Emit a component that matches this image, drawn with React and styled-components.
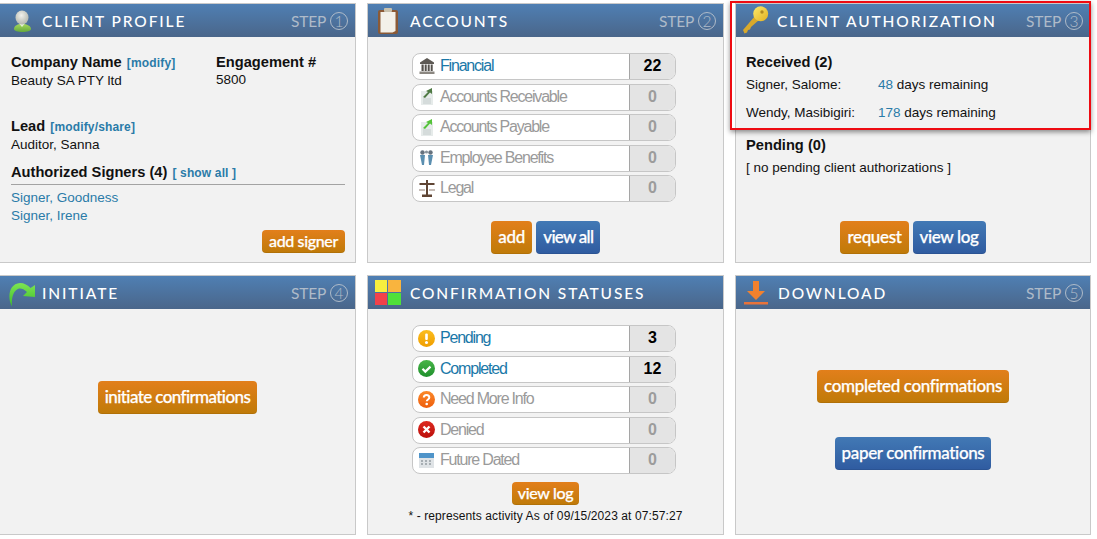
import React from "react";
import styled, { createGlobalStyle } from "styled-components";

const GlobalStyle = createGlobalStyle`
  html, body { margin: 0; padding: 0; background: #fff; }
  body { font-family: "Liberation Sans", Arial, sans-serif; font-size: 13.5px; color: #111; }
`;

const Page = styled.div`
  display: grid;
  grid-template-columns: 356px 357px 356px;
  grid-template-rows: 260px 260px;
  column-gap: 11px;
  row-gap: 12px;
  padding-top: 3px;
  width: 1097px;
  height: 536px;
  overflow: hidden;
`;

const PanelBox = styled.section`
  position: relative;
  display: flex;
  flex-direction: column;
  box-sizing: border-box;
  background: #f2f2f2;
  border: 1px solid #c9c9c9;
  border-left-width: ${(p) => (p.$flushLeft ? "0" : "1px")};
`;

const PanelHead = styled.header`
  display: flex;
  align-items: center;
  flex: none;
  height: 33px;
  padding-left: ${(p) => (p.$flushLeft ? "8px" : "6px")};
  padding-right: 7px;
  background: linear-gradient(#4f7fb3, #4a668a);
`;

const HeadIcon = styled.span`
  display: flex;
  align-items: center;
  justify-content: center;
  flex: none;
  width: 28px;
  height: 33px;
  margin-right: ${(p) => p.$gap}px;
`;

const Title = styled.h2`
  flex: 1;
  margin: 0;
  font-family: Lato, sans-serif;
  font-size: 15.5px;
  font-weight: 500;
  letter-spacing: 1.9px;
  color: #fff;
  white-space: nowrap;
`;

const Step = styled.div`
  display: flex;
  align-items: center;
  gap: 4px;
  font-family: Lato, sans-serif;
  font-size: 15.5px;
  letter-spacing: -0.2px;
  color: #afbbc9;
`;

const StepNum = styled.span`
  display: flex;
  align-items: center;
  justify-content: center;
  box-sizing: border-box;
  width: 18px;
  height: 18px;
  border: 1px solid #afbbc9;
  border-radius: 50%;
  font-size: 15.5px;
  font-weight: 300;
`;

const PanelBody = styled.div`
  flex: 1;
  display: flex;
  flex-direction: column;
  min-height: 0;
  padding: ${(p) => p.$padding || "0"};
`;

const ProfileTop = styled.div`
  display: grid;
  grid-template-columns: 205px 1fr;
  padding-top: 17px;
  height: 64px;
`;

const FieldLabel = styled.div`
  font-size: 14.67px;
  font-weight: 700;
  line-height: 17px;
`;

const FieldValue = styled.div`
  line-height: 18px;
`;

const SmallLink = styled.a`
  margin-left: 1px;
  font-size: 12px;
  font-weight: 700;
  letter-spacing: 0.15px;
  color: #2a7ba8;
`;

const SectionRule = styled.div`
  margin-top: 4px;
  border-bottom: 1px solid #a3a3a3;
  padding-bottom: 2px;
`;

const SignerLink = styled.div`
  line-height: 18px;
  color: #2a7ba8;
`;

const SignerList = styled.div`
  margin-top: 4px;
`;

const SignerBlock = styled.div`
  margin-top: 6px;
`;

const ButtonRow = styled.div`
  display: flex;
  justify-content: ${(p) => p.$align || "center"};
  gap: 4px;
  margin-top: ${(p) => p.$top || "auto"};
  padding-bottom: ${(p) => p.$bottom ?? 8}px;
`;

const Button = styled.button`
  display: block;
  box-sizing: border-box;
  height: ${(p) => p.$height || 33}px;
  padding: 0 ${(p) => p.$pad || 7}px 2px;
  border: 0;
  border-radius: 4px;
  font-family: Lato, sans-serif;
  font-size: ${(p) => p.$size || 17}px;
  font-weight: 500;
  letter-spacing: ${(p) => p.$track ?? -0.35}px;
  -webkit-text-stroke: 0.25px #fff;
  color: #fff;
  white-space: nowrap;
  background: ${(p) =>
    p.$blue
      ? "linear-gradient(#4279b5, #2f5ba0)"
      : "linear-gradient(#e27f1b, #bf7a08)"};
  box-shadow: inset 0 -1px 0 rgba(0, 0, 0, 0.08);
`;

const RowList = styled.div`
  display: flex;
  flex-direction: column;
  gap: 3.5px;
  width: 264px;
  margin: 16px 0 0 44px;
`;

const Row = styled.div`
  display: flex;
  box-sizing: border-box;
  height: 27px;
  overflow: hidden;
  border: 1px solid #c6c6c6;
  border-radius: 8px;
  background: #fff;
`;

const RowLabel = styled.div`
  flex: 1;
  display: flex;
  align-items: center;
  gap: 5px;
  padding: 0 0 1px 5px;
  font-size: 16px;
  letter-spacing: -1.2px;
  color: ${(p) => (p.$active ? "#1a78a8" : "#9a9a9a")};
`;

const RowIcon = styled.span`
  display: flex;
  align-items: center;
  justify-content: center;
  flex: none;
  width: 17px;
  height: 17px;
`;

const RowCount = styled.div`
  display: flex;
  align-items: center;
  justify-content: center;
  flex: none;
  width: 45px;
  padding-bottom: 1px;
  border-left: 1px solid #a5a5a5;
  background: #e4e4e4;
  font-size: 16px;
  font-weight: 700;
  color: ${(p) => (p.$active ? "#000" : "#9c9c9c")};
`;

const FootNote = styled.div`
  padding-top: 3px;
  text-align: center;
  font-size: 12px;
  line-height: 16px;
  letter-spacing: 0.1px;
`;

const AuthHeading = styled.div`
  font-size: 14.67px;
  font-weight: 700;
  line-height: 17px;
`;

const AuthLine = styled.div`
  display: grid;
  grid-template-columns: 132px 1fr;
  line-height: 17px;
  margin-top: ${(p) => p.$top}px;
`;

const Days = styled.span`
  color: #2a7ba8;
`;

const PendingBlock = styled.div`
  margin-top: 16px;
`;

const PendingNote = styled.div`
  margin-top: 5px;
  line-height: 17px;
`;

const Highlight = styled.div`
  position: absolute;
  left: -6px;
  right: -1px;
  top: -3px;
  height: 125px;
  border: 2px solid #ee0b12;
  box-shadow: 0 2px 5px rgba(0, 0, 0, 0.45);
  pointer-events: none;
`;

const CenterStack = styled.div`
  flex: 1;
  display: flex;
  flex-direction: column;
  align-items: center;
  padding-top: ${(p) => p.$top}px;
  gap: ${(p) => p.$gap || 0}px;
`;

/* drawings */

const PersonIcon = () => (
  <svg width="22" height="26" viewBox="0 0 22 26">
    <defs>
      <radialGradient id="head" cx="0.45" cy="0.35" r="0.75">
        <stop offset="0" stopColor="#f1f1ec" />
        <stop offset="1" stopColor="#a9ada3" />
      </radialGradient>
      <linearGradient id="shirt" x1="0" y1="0" x2="0" y2="1">
        <stop offset="0" stopColor="#a5d85c" />
        <stop offset="1" stopColor="#64a83c" />
      </linearGradient>
    </defs>
    <path d="M3 21c0-3 3-5 8-5s9 2 9 5c0 2-4 3-8.500 3S3 23 3 21z" fill="url(#shirt)" />
    <path d="M8 15.500l3 3.500 3-3.500z" fill="#e2efd2" />
    <ellipse cx="11" cy="9.500" rx="6.500" ry="7" fill="url(#head)" />
  </svg>
);

const ClipboardIcon = () => (
  <svg width="22" height="28" viewBox="0 0 22 28">
    <rect x="1" y="3" width="20" height="24" rx="2" fill="#8b5a36" />
    <path d="M3.500 5h15v19l-3 1.500h-12z" fill="#f3f1e9" />
    <rect x="7" y="1" width="8" height="4" rx="1" fill="#c9c2ae" />
  </svg>
);

const KeyIcon = () => (
  <svg width="28" height="30" viewBox="0 0 28 30">
    <defs>
      <linearGradient id="gold" x1="0" y1="0" x2="1" y2="1">
        <stop offset="0" stopColor="#fbea6c" />
        <stop offset="1" stopColor="#e3b021" />
      </linearGradient>
    </defs>
    <path d="M13 10L1 24l1.500 3.500L5 26.500 6 24l2-.5 1-2.500 8-7z" fill="#d8a92c" />
    <circle cx="18.700" cy="7.800" r="7.500" fill="url(#gold)" />
    <circle cx="20" cy="6" r="1.700" fill="#b28a20" />
  </svg>
);

const ArrowIcon = () => (
  <svg width="28" height="28" viewBox="0 0 28 28">
    <defs>
      <linearGradient id="bend" x1="0" y1="0" x2="0" y2="1">
        <stop offset="0" stopColor="#7ee552" />
        <stop offset="1" stopColor="#3dbd2b" />
      </linearGradient>
    </defs>
    <path
      d="M4 27.500C-1 19 1 4.500 12 4c4 0 8 2 10.500 5L27 6v12l-12-1 4-4c-3-3-6-4-8-3.500C6 11 3 18 4 27.500z"
      fill="url(#bend)"
    />
  </svg>
);

const SquaresIcon = () => (
  <svg width="26" height="25" viewBox="0 0 26 25">
    <rect x="0" y="0" width="12" height="12" fill="#f7ef3e" />
    <rect x="13" y="0" width="13" height="12" fill="#f9b43e" />
    <rect x="0" y="13" width="12" height="12" fill="#f2414a" />
    <rect x="13" y="13" width="13" height="12" fill="#4fe03a" />
  </svg>
);

const DownloadIcon = () => (
  <svg width="24" height="24" viewBox="0 0 24 24">
    <path d="M9 0h6v10h6l-9 9-9-9h6z" fill="#f2812e" />
    <rect x="0" y="21" width="24" height="2.500" fill="#e8733a" />
  </svg>
);

const BankIcon = () => (
  <svg width="16" height="16" viewBox="0 0 16 16">
    <path d="M8 0l7 4.500V6H1V4.500z" fill="#5d5954" />
    <path d="M2.500 6.500h2.200v6.500H2.500zM5.700 6.500h2v6.500h-2zM8.700 6.500h2v6.500h-2zM11.700 6.500h2v6.500h-2z" fill="#55514c" />
    <rect x="0.500" y="13.500" width="15" height="2.500" fill="#8b8781" />
  </svg>
);

const LedgerIcon = ({ arrow }) => (
  <svg width="14" height="17" viewBox="0 0 14 17">
    <rect x="1" y="3" width="12" height="14" fill="#e6ebea" />
    <path d="M3 11h8M3 13h8M3 15h8" stroke="#c4cccc" />
    <path d="M3 9l5-5-2-1 6-3v6l-2-1.500-5 5.500z" fill={arrow} />
  </svg>
);

const PeopleIcon = () => (
  <svg width="15" height="16" viewBox="0 0 15 16">
    <circle cx="3.500" cy="2.500" r="2.200" fill="#66727e" />
    <circle cx="11.500" cy="2.500" r="2.200" fill="#66727e" />
    <path d="M1 5h5l-1 10H3zM9 5h5l-2 10h-2z" fill="#5b8fb0" />
    <circle cx="7.500" cy="2" r="1.600" fill="#8a949c" />
  </svg>
);

const ScaleIcon = () => (
  <svg width="16" height="17" viewBox="0 0 16 17">
    <path d="M0.500 3h15v2H0.500zM7 0h2v15H7zM3 14.500h10V17H3z" fill="#5f4534" />
    <path d="M0 9.500h6v1H0zM10 9.500h6v1h-6z" fill="#8d7b6e" />
  </svg>
);

const Badge = ({ from, to, children }) => {
  const id = `badge-${from.slice(1)}`;
  return (
    <svg width="17" height="17" viewBox="0 0 17 17">
      <defs>
        <linearGradient id={id} x1="0" y1="0" x2="0" y2="1">
          <stop offset="0" stopColor={from} />
          <stop offset="1" stopColor={to} />
        </linearGradient>
      </defs>
      <circle cx="8.500" cy="8.500" r="8.500" fill={`url(#${id})`} />
      {children}
    </svg>
  );
};

const PendingIcon = () => (
  <Badge from="#fbbd1e" to="#f09e00">
    <rect x="7.200" y="3.500" width="2.600" height="6.500" rx="1" fill="#fff" />
    <circle cx="8.500" cy="12.500" r="1.500" fill="#fff" />
  </Badge>
);

const DoneIcon = () => (
  <Badge from="#48b548" to="#1f8f2c">
    <path d="M4.500 8.800l2.800 2.800 5.200-5" fill="none" stroke="#fff" strokeWidth="2.200" />
  </Badge>
);

const InfoIcon = () => (
  <Badge from="#fb8a2b" to="#ee5d0c">
    <path d="M5.800 6.500c0-3.500 5.500-3.500 5.500 0 0 2-2.500 2-2.500 3.800" fill="none" stroke="#fff" strokeWidth="2" />
    <circle cx="8.700" cy="13" r="1.300" fill="#fff" />
  </Badge>
);

const DeniedIcon = () => (
  <Badge from="#dd2a20" to="#bb0f0b">
    <path d="M5.500 5.500l6 6M11.500 5.500l-6 6" stroke="#fff" strokeWidth="2.400" />
  </Badge>
);

const CalendarIcon = () => (
  <svg width="17" height="17" viewBox="0 0 17 17">
    <rect x="1" y="1" width="15" height="15" fill="#dfe3e6" />
    <rect x="1" y="1" width="15" height="5" fill="#4f94c9" />
    <path d="M3 8h2v2H3zM7 8h2v2H7zM11 8h2v2h-2zM3 11h2v2H3zM7 11h2v2H7zM11 11h2v2h-2z" fill="#a7aeb3" />
  </svg>
);

/* pieces */

const Panel = ({ icon, title, step, gap = 8, flushLeft, children, overlay }) => (
  <PanelBox $flushLeft={flushLeft}>
    <PanelHead $flushLeft={flushLeft}>
      <HeadIcon $gap={gap}>{icon}</HeadIcon>
      <Title>{title}</Title>
      {step && (
        <Step>
          STEP<StepNum>{step}</StepNum>
        </Step>
      )}
    </PanelHead>
    {children}
    {overlay}
  </PanelBox>
);

const CountRow = ({ icon, label, count }) => (
  <Row>
    <RowLabel $active={count > 0}>
      <RowIcon>{icon}</RowIcon>
      {label}
    </RowLabel>
    <RowCount $active={count > 0}>{count}</RowCount>
  </Row>
);

const accounts = [
  { icon: <BankIcon />, label: "Financial", count: 22 },
  { icon: <LedgerIcon arrow="#4f7a45" />, label: "Accounts Receivable", count: 0 },
  { icon: <LedgerIcon arrow="#55c33a" />, label: "Accounts Payable", count: 0 },
  { icon: <PeopleIcon />, label: "Employee Benefits", count: 0 },
  { icon: <ScaleIcon />, label: "Legal", count: 0 },
];

const statuses = [
  { icon: <PendingIcon />, label: "Pending", count: 3 },
  { icon: <DoneIcon />, label: "Completed", count: 12 },
  { icon: <InfoIcon />, label: "Need More Info", count: 0 },
  { icon: <DeniedIcon />, label: "Denied", count: 0 },
  { icon: <CalendarIcon />, label: "Future Dated", count: 0 },
];

export default function App() {
  return (
    <Page>
      <GlobalStyle />

      <Panel icon={<PersonIcon />} title="CLIENT PROFILE" step="1" gap={6} flushLeft>
        <PanelBody $padding="0 10px 0 11px">
          <ProfileTop>
            <div>
              <FieldLabel>
                Company Name <SmallLink>[modify]</SmallLink>
              </FieldLabel>
              <FieldValue>Beauty SA PTY ltd</FieldValue>
            </div>
            <div>
              <FieldLabel>Engagement #</FieldLabel>
              <FieldValue>5800</FieldValue>
            </div>
          </ProfileTop>
          <div>
            <FieldLabel>
              Lead <SmallLink>[modify/share]</SmallLink>
            </FieldLabel>
            <FieldValue>Auditor, Sanna</FieldValue>
          </div>
          <SignerBlock>
            <SectionRule>
              <FieldLabel>
                Authorized Signers (4) <SmallLink>[ show all ]</SmallLink>
              </FieldLabel>
            </SectionRule>
            <SignerList>
              <SignerLink>Signer, Goodness</SignerLink>
              <SignerLink>Signer, Irene</SignerLink>
            </SignerList>
          </SignerBlock>
          <ButtonRow $align="flex-end" $bottom={9}>
            <Button $height={23} $size={16}>add signer</Button>
          </ButtonRow>
        </PanelBody>
      </Panel>

      <Panel icon={<ClipboardIcon />} title="ACCOUNTS" step="2">
        <PanelBody>
          <RowList>
            {accounts.map((row) => (
              <CountRow key={row.label} {...row} />
            ))}
          </RowList>
          <ButtonRow>
            <Button $pad={7.5}>add</Button>
            <Button $blue $track={-0.75}>view all</Button>
          </ButtonRow>
        </PanelBody>
      </Panel>

      <Panel
        icon={<KeyIcon />}
        title="CLIENT AUTHORIZATION"
        step="3"
        gap={7}
        overlay={<Highlight />}
      >
        <PanelBody $padding="17px 10px 0">
          <AuthHeading>Received (2)</AuthHeading>
          <AuthLine $top={5}>
            <span>Signer, Salome:</span>
            <span>
              <Days>48</Days> days remaining
            </span>
          </AuthLine>
          <AuthLine $top={11}>
            <span>Wendy, Masibigiri:</span>
            <span>
              <Days>178</Days> days remaining
            </span>
          </AuthLine>
          <PendingBlock>
            <AuthHeading>Pending (0)</AuthHeading>
            <PendingNote>[ no pending client authorizations ]</PendingNote>
          </PendingBlock>
          <ButtonRow>
            <Button>request</Button>
            <Button $blue>view log</Button>
          </ButtonRow>
        </PanelBody>
      </Panel>

      <Panel icon={<ArrowIcon />} title="INITIATE" step="4" gap={6} flushLeft>
        <PanelBody>
          <CenterStack $top={72}>
            <Button $track={-0.6}>initiate confirmations</Button>
          </CenterStack>
        </PanelBody>
      </Panel>

      <Panel icon={<SquaresIcon />} title="CONFIRMATION STATUSES">
        <PanelBody>
          <RowList>
            {statuses.map((row) => (
              <CountRow key={row.label} {...row} />
            ))}
          </RowList>
          <ButtonRow $top="8px" $bottom={0}>
            <Button $height={23} $size={16} $pad={6}>view log</Button>
          </ButtonRow>
          <FootNote>* - represents activity As of 09/15/2023 at 07:57:27</FootNote>
        </PanelBody>
      </Panel>

      <Panel icon={<DownloadIcon />} title="DOWNLOAD" step="5">
        <PanelBody>
          <CenterStack $top={61} $gap={34}>
            <Button>completed confirmations</Button>
            <Button $blue>paper confirmations</Button>
          </CenterStack>
        </PanelBody>
      </Panel>
    </Page>
  );
}
